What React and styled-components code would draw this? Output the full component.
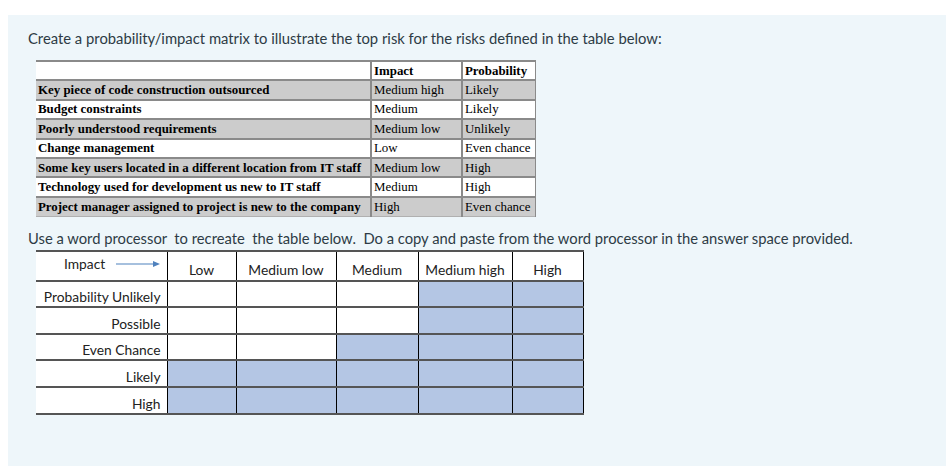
import React from 'react';
import styled, { createGlobalStyle } from 'styled-components';

const GlobalStyle = createGlobalStyle`
  body {
    margin: 0;
    background: #ffffff;
  }
`;

const risks = [
  ['Key piece of code construction outsourced', 'Medium high', 'Likely'],
  ['Budget constraints', 'Medium', 'Likely'],
  ['Poorly understood requirements', 'Medium low', 'Unlikely'],
  ['Change management', 'Low', 'Even chance'],
  ['Some key users located in a different location from IT staff', 'Medium low', 'High'],
  ['Technology used for development us new to IT staff', 'Medium', 'High'],
  ['Project manager assigned to project is new to the company', 'High', 'Even chance'],
];

const impacts = ['Low', 'Medium low', 'Medium', 'Medium high', 'High'];
const matrixCols = [131, 69, 100, 82, 94, 71];

// how many cells from the right are shaded in each probability row
const matrix = [
  ['Probability Unlikely', 2],
  ['Possible', 2],
  ['Even Chance', 3],
  ['Likely', 5],
  ['High', 5],
];

const ImpactArrow = () => (
  <svg width="44" height="8" viewBox="0 0 44 8">
    <line x1="0" y1="4" x2="38" y2="4" stroke="#4f81bd" strokeWidth="1.2" />
    <polygon points="37,1 44,4 37,7" fill="#4f81bd" />
  </svg>
);

export default function App() {
  return (
    <>
      <GlobalStyle />
      <Page>
        <Panel>
          <Prompt>Create a probability/impact matrix to illustrate the top risk for the risks defined in the table below:</Prompt>
          <RiskTable>
            <colgroup>
              <col style={{ width: 335 }} />
              <col style={{ width: 91 }} />
              <col style={{ width: 73 }} />
            </colgroup>
            <tbody>
              <RiskRow>
                <RiskCell />
                <RiskCell bold>Impact</RiskCell>
                <RiskCell bold>Probability</RiskCell>
              </RiskRow>
              {risks.map((r, i) => (
                <RiskRow key={r[0]} shaded={i % 2 === 0}>
                  <RiskCell bold>{r[0]}</RiskCell>
                  <RiskCell>{r[1]}</RiskCell>
                  <RiskCell>{r[2]}</RiskCell>
                </RiskRow>
              ))}
            </tbody>
          </RiskTable>
          <Instruction>
            Use a word processor&nbsp; to recreate&nbsp; the table below.&nbsp; Do a copy and paste from the word processor in the answer space provided.
          </Instruction>
          <MatrixTable>
            <colgroup>
              {matrixCols.map((w, i) => (
                <col key={i} style={{ width: w }} />
              ))}
            </colgroup>
            <tbody>
              <MatrixHead>
                <CornerCell>
                  <CornerInner>
                    <span>Impact</span>
                    <ImpactArrow />
                  </CornerInner>
                </CornerCell>
                {impacts.map((c) => (
                  <HeadCell key={c}>{c}</HeadCell>
                ))}
              </MatrixHead>
              {matrix.map(([label, hot]) => (
                <MatrixRow key={label}>
                  <LabelCell>{label}</LabelCell>
                  {impacts.map((c, j) => (
                    <GridCell key={c} filled={j >= impacts.length - hot} />
                  ))}
                </MatrixRow>
              ))}
            </tbody>
          </MatrixTable>
        </Panel>
      </Page>
    </>
  );
}

const Page = styled.div`
  padding: 15px 0 0 8px;
  height: 466px;
  box-sizing: border-box;
  overflow: hidden;
`;

const Panel = styled.div`
  background: #eef6fa;
  height: 451px;
  padding: 14px 0 0 20px;
  box-sizing: border-box;
  font-family: Lato, "Open Sans", sans-serif;
  color: #2d3b45;
`;

const Prompt = styled.div`
  font-size: 14.8px;
  line-height: 18px;
  margin-bottom: 13px;
`;

const Instruction = styled.div`
  font-size: 14.75px;
  line-height: 18px;
  margin: 12px 0 3px;
`;

const RiskTable = styled.table`
  margin-left: 8px;
  border-collapse: collapse;
  table-layout: fixed;
  width: 499px;
  font-family: "Liberation Serif", "Times New Roman", serif;
  font-size: 12.9px;
  color: #000;
  border-top: 2px solid #8a8a8a;
  border-bottom: 1px solid #b0b0b0;
`;

const RiskRow = styled.tr`
  height: 19.4px;
  background: ${(p) => (p.shaded ? '#cccccc' : '#ffffff')};
`;

const RiskCell = styled.td`
  padding: 0 2px;
  font-weight: ${(p) => (p.bold ? 700 : 400)};
  white-space: nowrap;
  border-top: 2px solid #8a8a8a;
  line-height: 16px;
  & + & {
    border-left: 2px solid #8a8a8a;
  }
  &:last-child {
    border-right: 1px solid #8a8a8a;
  }
`;

const MatrixTable = styled.table`
  margin-left: 8px;
  border-collapse: collapse;
  table-layout: fixed;
  width: 547px;
  font-family: Lato, "Open Sans", sans-serif;
  font-size: 13.8px;
  color: #222;
  border-top: 2px solid #555;
  border-bottom: 2px solid #555;
`;

const MatrixHead = styled.tr`
  height: 30px;
  background: #ffffff;
`;

const MatrixRow = styled.tr`
  height: 26.6px;
  background: #ffffff;
`;

const CornerCell = styled.td`
  padding: 0;
  vertical-align: top;
`;

const CornerInner = styled.div`
  display: flex;
  align-items: center;
  gap: 11px;
  padding: 4px 0 0 28px;
  line-height: 16px;
`;

const HeadCell = styled.td`
  text-align: center;
  vertical-align: bottom;
  padding: 0 0 2px;
  line-height: 16px;
  border-left: 1px solid #000;
  &:last-child {
    border-right: 1px solid #000;
  }
`;

const LabelCell = styled.td`
  text-align: right;
  vertical-align: bottom;
  padding: 0 6px 1px 0;
  line-height: 16px;
  white-space: nowrap;
  border-top: 2px solid #555;
`;

const GridCell = styled.td`
  padding: 0;
  background: ${(p) => (p.filled ? '#b4c6e4' : '#ffffff')};
  border-top: 2px solid #555;
  border-left: 1px solid #000;
  &:last-child {
    border-right: 1px solid #000;
  }
`;
